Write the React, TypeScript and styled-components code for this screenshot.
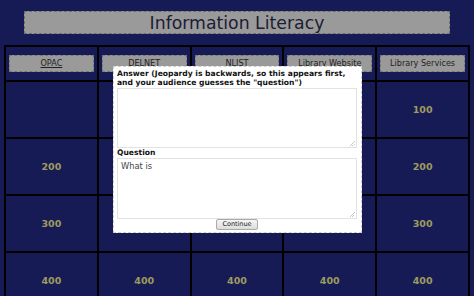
import React from "react";
import styled, { createGlobalStyle } from "styled-components";

const Global = createGlobalStyle`
  html, body { margin: 0; padding: 0; }
  body {
    background: #171b55;
    font-family: "DejaVu Sans", Verdana, sans-serif;
    width: 474px;
    height: 296px;
    overflow: hidden;
  }
`;

const Page = styled.div`
  position: relative;
  width: 474px;
  height: 296px;
  padding-top: 11px;
  box-sizing: border-box;
  overflow: hidden;
`;

const TitleBar = styled.h1`
  margin: 0 24px 0 24px;
  height: 23px;
  box-sizing: border-box;
  background: #9a9a9a;
  border: 1px dashed #6f6f6f;
  font-weight: normal;
  font-size: 17.3px;
  line-height: 23px;
  color: #1c1c34;
  text-align: center;
`;

const Board = styled.div`
  margin: 11px 0 0 4px;
  width: 466px;
  box-sizing: border-box;
  background: #000;
  padding: 2px;
  display: grid;
  grid-template-columns: repeat(5, 1fr);
  grid-auto-rows: 55px;
  grid-template-rows: 33px;
  gap: 2px;
`;

const HeaderCell = styled.div`
  background: #171b55;
  padding: 8px 3px 0;
`;

const CategoryButton = styled.div<{ $link?: boolean }>`
  height: 17px;
  box-sizing: border-box;
  background: #9a9a9a;
  border: 1px dashed #777;
  color: #222;
  font-size: 8.1px;
  line-height: 15px;
  text-align: center;
  white-space: nowrap;
  text-decoration: ${(p) => (p.$link ? "underline" : "none")};
`;

const ValueCell = styled.div`
  background: #171b55;
  display: flex;
  align-items: center;
  justify-content: center;
  color: #9e9b5e;
  font-weight: bold;
  font-size: 9.5px;
`;

const Modal = styled.div`
  position: absolute;
  left: 113px;
  top: 66px;
  width: 249px;
  height: 167px;
  box-sizing: border-box;
  background: #fff;
  border: 1px dashed #cfcfcf;
  padding: 2px 4px 0 3px;
  display: flex;
  flex-direction: column;
`;

const Label = styled.div`
  font-weight: bold;
  font-size: 7.6px;
  line-height: 9px;
  color: #111;
`;

const Area = styled.div<{ $h: number }>`
  position: relative;
  height: ${(p) => p.$h}px;
  box-sizing: border-box;
  border: 1px solid #e2e2e2;
  margin: 1px 0 0 0;
  padding: 2px 3px;
  font-size: 8.3px;
  color: #444;
  &::after {
    content: "";
    position: absolute;
    right: 1px;
    bottom: 1px;
    width: 5px;
    height: 5px;
    background: linear-gradient(135deg, transparent 45%, #c8c8c8 45%, #c8c8c8 55%, transparent 55%, transparent 70%, #c8c8c8 70%, #c8c8c8 80%, transparent 80%);
  }
`;

const ButtonRow = styled.div`
  display: flex;
  justify-content: center;
  margin-top: 0;
`;

const Button = styled.button`
  font-family: "DejaVu Sans", Verdana, sans-serif;
  font-size: 6.5px;
  height: 11px;
  padding: 0 5px;
  background: linear-gradient(#f6f6f6, #dcdcdc);
  border: 1px solid #aaa;
  border-radius: 2px;
  color: #222;
  line-height: 9px;
`;

const categories = [
  { name: "OPAC", link: true },
  { name: "DELNET", link: true },
  { name: "NLIST", link: true },
  { name: "Library Website", link: true },
  { name: "Library Services", link: false },
];

const rows: (string | null)[][] = [
  [null, null, null, null, "100"],
  ["200", null, null, null, "200"],
  ["300", null, null, null, "300"],
  ["400", "400", "400", "400", "400"],
];

export default function App() {
  return (
    <>
      <Global />
      <Page>
        <TitleBar>Information Literacy</TitleBar>
        <Board>
          {categories.map((c) => (
            <HeaderCell key={c.name}>
              <CategoryButton $link={c.link}>{c.name}</CategoryButton>
            </HeaderCell>
          ))}
          {rows.flatMap((r, i) =>
            r.map((v, j) => <ValueCell key={`${i}-${j}`}>{v}</ValueCell>)
          )}
        </Board>
        <Modal>
          <Label>
            Answer (Jeopardy is backwards, so this appears first,
            <br />
            and your audience guesses the "question")
          </Label>
          <Area $h={60} />
          <Label>Question</Label>
          <Area $h={61}>What is</Area>
          <ButtonRow>
            <Button>Continue</Button>
          </ButtonRow>
        </Modal>
      </Page>
    </>
  );
}
